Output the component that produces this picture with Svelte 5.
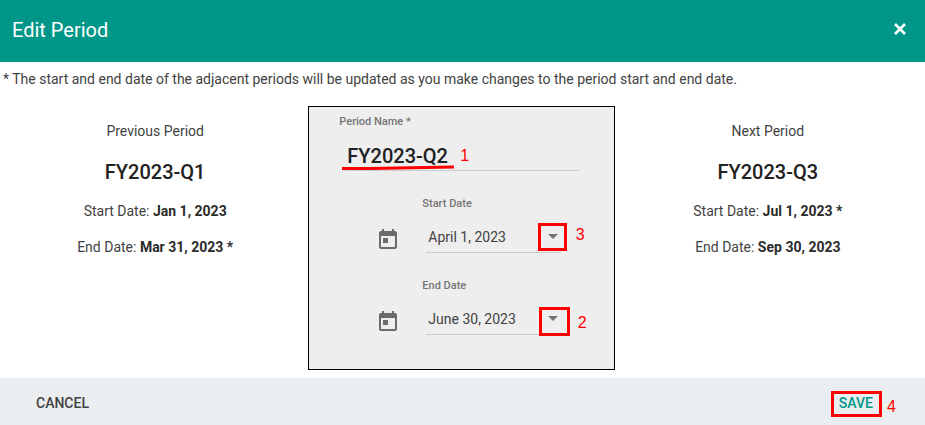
<script>
    let periodName = 'FY2023-Q2';

    let dates = [
        { id: 'start-date', label: 'Start Date', value: 'April 1, 2023', mark: '3' },
        { id: 'end-date', label: 'End Date', value: 'June 30, 2023', mark: '2' },
    ];

    const previous = {
        title: 'Previous Period',
        name: 'FY2023-Q1',
        start: 'Jan 1, 2023',
        end: 'Mar 31, 2023',
        changed: 'end',
    };

    const next = {
        title: 'Next Period',
        name: 'FY2023-Q3',
        start: 'Jul 1, 2023',
        end: 'Sep 30, 2023',
        changed: 'start',
    };
</script>

{#snippet adjacent(period)}
    <section class="adjacent">
        <p>{period.title}</p>
        <h2>{period.name}</h2>
        <p class="date">Start Date: <strong>{period.start}{period.changed === 'start' ? ' *' : ''}</strong></p>
        <p class="date">End Date: <strong>{period.end}{period.changed === 'end' ? ' *' : ''}</strong></p>
    </section>
{/snippet}

<div class="dialog">
    <header>
        <h1>Edit Period</h1>
        <button type="button" class="close" aria-label="Close">
            <svg width="14" height="14" viewBox="0 0 14 14">
                <path d="M2 2l10 10M12 2L2 12" stroke="#fff" stroke-width="2.7" />
            </svg>
        </button>
    </header>

    <p class="note">* The start and end date of the adjacent periods will be updated as you make changes to the period start and end date.</p>

    <main>
        {@render adjacent(previous)}

        <form class="current">
            <label for="period-name">Period Name *</label>
            <div class="name">
                <input id="period-name" type="text" bind:value={periodName}>
                <svg class="underline" width="112" height="5" viewBox="0 0 112 5">
                    <path d="M0 3.5L28 3.5L84 2.5L112 2" fill="none" stroke="#f00" stroke-width="3" />
                </svg>
                <span class="mark">1</span>
            </div>

            {#each dates as date}
                <div class="field">
                    <label for={date.id}>{date.label}</label>
                    <div class="picker">
                        <svg width="24" height="24" viewBox="0 0 24 24">
                            <path fill="#6b6b6b" d="M19 3h-1V1h-2v2H8V1H6v2H5c-1.11 0-1.99.9-1.99 2L3 19c0 1.1.89 2 2 2h14c1.1 0 2-.9 2-2V5c0-1.1-.9-2-2-2zm0 16H5V8h14v11zM7 10h5v5H7z" />
                        </svg>
                        <div class="value">
                            <input id={date.id} type="text" bind:value={date.value}>
                            <button type="button" aria-label="Open calendar">
                                <svg width="10" height="5" viewBox="0 0 10 5">
                                    <path fill="#757575" d="M0 0h10L5 5z" />
                                </svg>
                            </button>
                            <span class="box {date.id}"></span>
                            <span class="mark {date.id}">{date.mark}</span>
                        </div>
                    </div>
                </div>
            {/each}
        </form>

        {@render adjacent(next)}
    </main>

    <footer>
        <button type="button">CANCEL</button>
        <div class="save">
            <button type="button">SAVE</button>
            <span class="box"></span>
            <span class="mark">4</span>
        </div>
    </footer>
</div>

<style>
    .dialog {
        font-family: Roboto, "Liberation Sans", sans-serif;
        font-size: 14px;
        line-height: 20px;
        color: #424242;
        background: #fff;
    }

    h1, h2, p {
        margin: 0;
    }

    button, input {
        font: inherit;
        color: inherit;
        background: none;
        border: 0;
        padding: 0;
        outline: none;
    }

    header {
        display: flex;
        align-items: center;
        justify-content: space-between;
        height: 62px;
        box-sizing: border-box;
        padding: 0 18px 4px 12px;
        background: #009688;
        color: #fff;
    }

    h1 {
        padding-top: 2px;
        font-size: 20px;
        line-height: 24px;
        font-weight: 400;
    }

    .close, .close svg {
        display: block;
    }

    .note {
        padding: 7px 3px 17px;
    }

    main {
        display: grid;
        grid-template-columns: repeat(3, minmax(0, 1fr));
        padding: 0 4px 8px 2px;
    }

    .adjacent {
        padding-top: 15px;
        text-align: center;
    }

    h2 {
        margin: 19px 0 17px;
        font-size: 20px;
        line-height: 24px;
        font-weight: 500;
        color: #212121;
    }

    .date {
        margin-bottom: 16px;
    }

    strong {
        font-weight: 700;
        color: #2b2b2b;
    }

    .current {
        box-sizing: border-box;
        height: 264px;
        padding: 9px 35px 0 30px;
        border: 1px solid #000;
        background: #eee;
    }

    label {
        display: block;
        font-size: 11px;
        line-height: 12px;
        font-weight: 500;
        color: #757575;
    }

    .name {
        position: relative;
        margin: 13px 0 27px 6px;
    }

    .name input {
        display: block;
        box-sizing: border-box;
        width: 100%;
        height: 30px;
        padding: 0 2px;
        border-bottom: 1px solid #ccc;
        font-size: 20px;
        font-weight: 500;
        color: #212121;
    }

    .underline {
        position: absolute;
        left: -3px;
        top: 24px;
    }

    .mark {
        position: absolute;
        font-family: "Liberation Sans", Arial, sans-serif;
        font-size: 16px;
        line-height: 18px;
        color: #f00;
    }

    .name .mark {
        left: 115px;
        top: 6px;
    }

    .field {
        margin: 0 18px 27px 37px;
    }

    .field label {
        margin-left: 46px;
    }

    .picker {
        display: flex;
        gap: 26px;
        padding-top: 13px;
    }

    .picker > svg {
        flex: none;
        margin-top: 5px;
    }

    .value {
        position: relative;
        display: flex;
        flex: 1;
        align-items: center;
        box-sizing: border-box;
        min-width: 0;
        height: 30px;
        padding: 0 3px 2px 2px;
        border-bottom: 1px solid #ccc;
    }

    .value input {
        flex: 1;
        min-width: 0;
    }

    .value button {
        display: block;
    }

    .value button svg {
        display: block;
    }

    .box {
        position: absolute;
        box-sizing: border-box;
        border: 3px solid #f00;
        pointer-events: none;
    }

    .box.start-date {
        right: -6px;
        top: 0;
        width: 29px;
        height: 28px;
    }

    .box.end-date {
        right: -9px;
        top: 2px;
        width: 31px;
        height: 29px;
    }

    .mark.start-date {
        right: -24px;
        top: 3px;
    }

    .mark.end-date {
        right: -26px;
        top: 9px;
    }

    footer {
        display: flex;
        align-items: center;
        justify-content: space-between;
        box-sizing: border-box;
        height: 47px;
        padding: 2px 52px 0 36px;
        background: #eaeef1;
    }

    footer button {
        display: block;
        height: 36px;
        line-height: 36px;
        font-weight: 500;
    }

    .save {
        position: relative;
    }

    .save button {
        color: #009688;
    }

    .save .box {
        left: -8px;
        right: -9px;
        top: 6px;
        height: 26px;
    }

    .save .mark {
        right: -23px;
        top: 13px;
    }
</style>
